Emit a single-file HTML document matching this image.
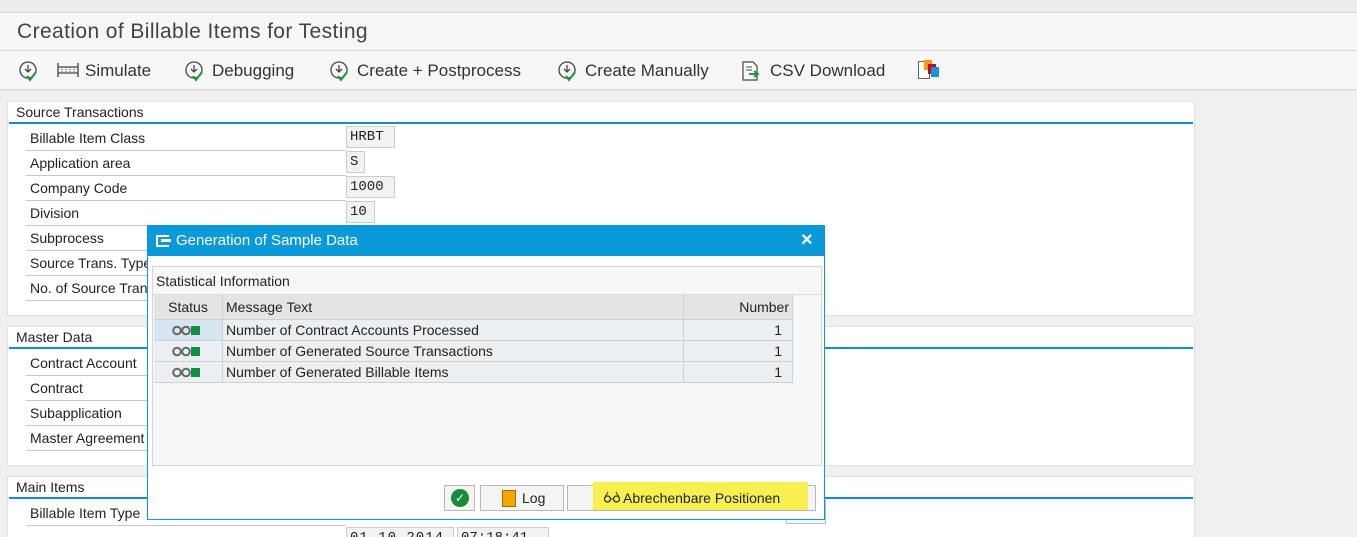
<!DOCTYPE html>
<html><head><meta charset="utf-8"><style>
*{box-sizing:border-box;margin:0;padding:0}
html{width:1357px;height:537px;overflow:hidden}
body{width:1357px;height:537px;overflow:hidden;background:#f0f0f0;font-family:"Liberation Sans",Arial,sans-serif;font-size:14px;color:#222;position:relative}
.abs{position:absolute}
.top{left:0;top:0;width:1357px;height:13px;background:#ececec;border-bottom:1px solid #d6d6d6}
.title{left:0;top:13px;width:1357px;height:38px;background:#f7f7f7;border-bottom:1px solid #dcdcdc;font-size:21px;color:#444;padding:7px 0 0 17px;letter-spacing:0.4px}
.tb{left:0;top:51px;width:1357px;height:40px;background:#f7f7f7;border-bottom:2px solid #e0e0e0;font-size:17px;color:#333}
.tb span{position:absolute;top:10px}
.tb svg{position:absolute;top:9px}
.box{background:#fff;border:1px solid #dde3e8}
.hd{position:absolute;left:8px;font-size:14px}
.bl{position:absolute;left:1px;right:1px;height:2px;background:#0a8fd3}
.lab{position:absolute;left:18px;width:320px;border-bottom:1px solid #c8c8c8;padding-left:4px;height:25px;line-height:24px}
.inp{position:absolute;left:338px;height:22px;background:#f2f2f2;border:1px solid #ccc;font-family:"Liberation Mono",monospace;font-size:14px;line-height:20px;padding-left:3px}
.dlg{left:147px;top:225px;width:678px;height:295px;background:#fff;border:1px solid #0a9ad9}
.dt{left:0;top:0;width:676px;height:30px;background:#0a9ad9;color:#fff;font-size:15px;padding:6px 0 0 28px}
.cell{position:absolute;height:21px;line-height:20px;border-right:1px solid #d0d0d0;border-bottom:1px solid #d0d0d0;padding-left:3px;background:#eceff2}
.btn{position:absolute;top:259px;height:26px;border:1px solid #b8b8b8;background:#f4f4f4}
</style></head><body>
<div class="abs top"></div>
<div class="abs title">Creation of Billable Items for Testing</div>
<div class="abs tb">
<svg style="left:18px" width="22" height="22" viewBox="0 0 22 22"><circle cx="10" cy="10" r="8" fill="none" stroke="#444" stroke-width="1.3"/><path d="M10 5v7M7 9l3 3 3-3" fill="none" stroke="#444" stroke-width="1.3"/><path d="M9 16l3 4 6-8" fill="none" stroke="#1a9a3a" stroke-width="2"/></svg>
<svg style="left:57px;top:11px" width="22" height="16" viewBox="0 0 22 16"><path d="M1 1v14M21 1v14M1 5h20M1 11h20" stroke="#444" stroke-width="1.3"/><path d="M5 5v6M9 5v6M13 5v6M17 5v6" stroke="#444" stroke-width="1" stroke-dasharray="1 1"/></svg>
<span style="left:85px">Simulate</span>
<svg style="left:184px" width="22" height="22" viewBox="0 0 22 22"><circle cx="10" cy="10" r="8" fill="none" stroke="#444" stroke-width="1.3"/><path d="M10 5v7M7 9l3 3 3-3" fill="none" stroke="#444" stroke-width="1.3"/><path d="M9 16l3 4 6-8" fill="none" stroke="#1a9a3a" stroke-width="2"/></svg>
<span style="left:212px">Debugging</span>
<svg style="left:329px" width="22" height="22" viewBox="0 0 22 22"><circle cx="10" cy="10" r="8" fill="none" stroke="#444" stroke-width="1.3"/><path d="M10 5v7M7 9l3 3 3-3" fill="none" stroke="#444" stroke-width="1.3"/><path d="M9 16l3 4 6-8" fill="none" stroke="#1a9a3a" stroke-width="2"/></svg>
<span style="left:357px">Create + Postprocess</span>
<svg style="left:557px" width="22" height="22" viewBox="0 0 22 22"><circle cx="10" cy="10" r="8" fill="none" stroke="#444" stroke-width="1.3"/><path d="M10 5v7M7 9l3 3 3-3" fill="none" stroke="#444" stroke-width="1.3"/><path d="M9 16l3 4 6-8" fill="none" stroke="#1a9a3a" stroke-width="2"/></svg>
<span style="left:585px">Create Manually</span>
<svg style="left:741px" width="22" height="22" viewBox="0 0 22 22"><path d="M2 2h10l4 4v14H2z" fill="#fff" stroke="#444" stroke-width="1.2"/><path d="M5 7h6M5 10h6" stroke="#444"/><path d="M8 14h8M13 11l4 3-4 3" fill="none" stroke="#1a9a3a" stroke-width="2"/></svg>
<span style="left:770px">CSV Download</span>
<div class="abs" style="left:918px;top:10px;width:12px;height:18px;border:1px solid #666;background:#fff"></div>
<div class="abs" style="left:924px;top:9px;width:8px;height:10px;background:#f39c12"></div>
<div class="abs" style="left:928px;top:13px;width:8px;height:10px;background:#d0021b"></div>
<div class="abs" style="left:931px;top:16px;width:8px;height:10px;background:#0a9ad9"></div>
</div>

<div class="abs box" style="left:7px;top:101px;width:1188px;height:215px">
<div class="hd" style="top:2px">Source Transactions</div><div class="bl" style="top:20px"></div>
<div class="lab" style="top:24px">Billable Item Class</div><div class="inp" style="top:24px;width:49px">HRBT</div>
<div class="lab" style="top:49px">Application area</div><div class="inp" style="top:49px;width:19px">S</div>
<div class="lab" style="top:74px">Company Code</div><div class="inp" style="top:74px;width:49px">1000</div>
<div class="lab" style="top:99px">Division</div><div class="inp" style="top:99px;width:29px">10</div>
<div class="lab" style="top:124px">Subprocess</div>
<div class="lab" style="top:149px">Source Trans. Type</div>
<div class="lab" style="top:174px">No. of Source Trans.</div>
</div>
<div class="abs box" style="left:7px;top:326px;width:1188px;height:140px">
<div class="hd" style="top:2px">Master Data</div><div class="bl" style="top:20px"></div>
<div class="lab" style="top:24px">Contract Account</div>
<div class="lab" style="top:49px">Contract</div>
<div class="lab" style="top:74px">Subapplication</div>
<div class="lab" style="top:99px">Master Agreement</div>
</div>
<div class="abs box" style="left:7px;top:476px;width:1188px;height:70px">
<div class="hd" style="top:2px">Main Items</div><div class="bl" style="top:20px"></div>
<div class="lab" style="top:24px">Billable Item Type</div>
<div class="inp" style="top:50px;width:108px;letter-spacing:1px">01.10.2014</div><div class="inp" style="left:449px;top:50px;width:92px">07:18:41</div>
</div>
<div class="abs" style="left:786px;top:500px;width:40px;height:24px;border:1px solid #bbb;background:#f4f4f4"></div>

<div class="abs dlg">
<div class="abs dt">Generation of Sample Data</div>
<div class="abs" style="left:8px;top:9px;width:13px;height:12px;border:2px solid #fff;border-right:none"></div>
<div class="abs" style="left:13px;top:13px;width:10px;height:3px;background:#fff"></div>
<div class="abs" style="left:653px;top:3px;color:#fff;font-size:20px;font-weight:bold">×</div>
<div class="abs" style="left:4px;top:40px;width:670px;height:200px;background:#f7f7f7;border:1px solid #d6d6d6">
<div class="abs" style="left:3px;top:6px">Statistical Information</div>
<div class="abs" style="left:0;top:27px;width:668px;border-top:1px solid #ddd"></div>
</div>
<div class="cell" style="left:6px;top:69px;width:69px;height:25px;line-height:24px;background:#e4e4e4;text-align:center;padding:0">Status</div>
<div class="cell" style="left:75px;top:69px;width:461px;height:25px;line-height:24px;background:#e4e4e4">Message Text</div>
<div class="cell" style="left:536px;top:69px;width:109px;height:25px;line-height:24px;background:#e4e4e4;text-align:right;padding-right:3px">Number</div>

<div class="cell" style="left:6px;top:94px;width:69px;background:#d5e6f2"></div>
<div class="cell" style="left:75px;top:94px;width:461px">Number of Contract Accounts Processed</div>
<div class="cell" style="left:536px;top:94px;width:109px;text-align:right;padding-right:10px">1</div>
<div class="cell" style="left:6px;top:115px;width:69px"></div>
<div class="cell" style="left:75px;top:115px;width:461px">Number of Generated Source Transactions</div>
<div class="cell" style="left:536px;top:115px;width:109px;text-align:right;padding-right:10px">1</div>
<div class="cell" style="left:6px;top:136px;width:69px"></div>
<div class="cell" style="left:75px;top:136px;width:461px">Number of Generated Billable Items</div>
<div class="cell" style="left:536px;top:136px;width:109px;text-align:right;padding-right:10px">1</div>
<svg class="abs" style="left:24px;top:99px" width="34" height="11" viewBox="0 0 34 11"><circle cx="5" cy="5.5" r="3.8" fill="none" stroke="#666" stroke-width="2"/><circle cx="14" cy="5.5" r="3.8" fill="none" stroke="#666" stroke-width="2"/><rect x="19" y="1" width="9" height="9" fill="#109040"/></svg>
<svg class="abs" style="left:24px;top:120px" width="34" height="11" viewBox="0 0 34 11"><circle cx="5" cy="5.5" r="3.8" fill="none" stroke="#666" stroke-width="2"/><circle cx="14" cy="5.5" r="3.8" fill="none" stroke="#666" stroke-width="2"/><rect x="19" y="1" width="9" height="9" fill="#109040"/></svg>
<svg class="abs" style="left:24px;top:141px" width="34" height="11" viewBox="0 0 34 11"><circle cx="5" cy="5.5" r="3.8" fill="none" stroke="#666" stroke-width="2"/><circle cx="14" cy="5.5" r="3.8" fill="none" stroke="#666" stroke-width="2"/><rect x="19" y="1" width="9" height="9" fill="#109040"/></svg>

<div class="btn" style="left:296px;width:31px"><div class="abs" style="left:6px;top:3px;width:18px;height:18px;border-radius:50%;background:#1a8a3a;color:#fff;font-size:12px;text-align:center;line-height:18px">✓</div></div>
<div class="btn" style="left:332px;width:84px"><div class="abs" style="left:21px;top:4px;width:14px;height:17px;background:#f0a800;border:1px solid #a07000"></div><div class="abs" style="left:41px;top:4px">Log</div></div>
<div class="btn" style="left:419px;width:249px"></div>
<div class="abs" style="left:445px;top:256px;width:215px;height:28px;background:#f8f050"></div>
<svg class="abs" style="left:455px;top:265px" width="18" height="12" viewBox="0 0 18 12"><path d="M2 6L5 1M16 6L13 1" stroke="#333" fill="none"/><circle cx="4.5" cy="8" r="3" fill="none" stroke="#333" stroke-width="1.3"/><circle cx="13.5" cy="8" r="3" fill="none" stroke="#333" stroke-width="1.3"/><path d="M7.5 8h3" stroke="#333"/></svg>
<div class="abs" style="left:475px;top:264px">Abrechenbare Positionen</div>
</div>
</body></html>
